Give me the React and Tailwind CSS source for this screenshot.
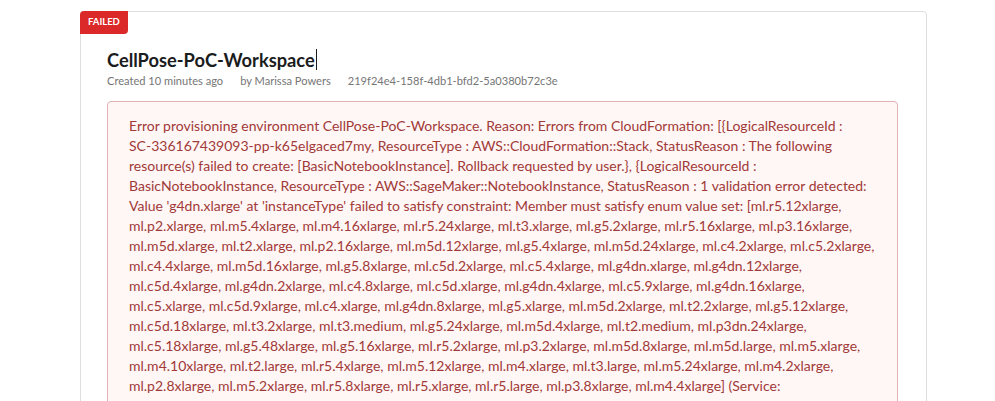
import React from "react";

const errorStart =
  "Error provisioning environment CellPose-PoC-Workspace. Reason: Errors from CloudFormation: [{LogicalResourceId : ";
const errorId = "SC-336167439093-pp-k65elgaced7my,";
const errorRest =
  " ResourceType : AWS::CloudFormation::Stack, StatusReason : The following resource(s) failed to create: [BasicNotebookInstance]. Rollback requested by user.}, {LogicalResourceId : BasicNotebookInstance, ResourceType : AWS::SageMaker::NotebookInstance, StatusReason : 1 validation error detected: Value 'g4dn.xlarge' at 'instanceType' failed to satisfy constraint: Member must satisfy enum value set: [ml.r5.12xlarge, ml.p2.xlarge, ml.m5.4xlarge, ml.m4.16xlarge, ml.r5.24xlarge, ml.t3.xlarge, ml.g5.2xlarge, ml.r5.16xlarge, ml.p3.16xlarge, ml.m5d.xlarge, ml.t2.xlarge, ml.p2.16xlarge, ml.m5d.12xlarge, ml.g5.4xlarge, ml.m5d.24xlarge, ml.c4.2xlarge, ml.c5.2xlarge, ml.c4.4xlarge, ml.m5d.16xlarge, ml.g5.8xlarge, ml.c5d.2xlarge, ml.c5.4xlarge, ml.g4dn.xlarge, ml.g4dn.12xlarge, ml.c5d.4xlarge, ml.g4dn.2xlarge, ml.c4.8xlarge, ml.c5d.xlarge, ml.g4dn.4xlarge, ml.c5.9xlarge, ml.g4dn.16xlarge, ml.c5.xlarge, ml.c5d.9xlarge, ml.c4.xlarge, ml.g4dn.8xlarge, ml.g5.xlarge, ml.m5d.2xlarge, ml.t2.2xlarge, ml.g5.12xlarge, ml.c5d.18xlarge, ml.t3.2xlarge, ml.t3.medium, ml.g5.24xlarge, ml.m5d.4xlarge, ml.t2.medium, ml.p3dn.24xlarge, ml.c5.18xlarge, ml.g5.48xlarge, ml.g5.16xlarge, ml.r5.2xlarge, ml.p3.2xlarge, ml.m5d.8xlarge, ml.m5d.large, ml.m5.xlarge, ml.m4.10xlarge, ml.t2.large, ml.r5.4xlarge, ml.m5.12xlarge, ml.m4.xlarge, ml.t3.large, ml.m5.24xlarge, ml.m4.2xlarge, ml.p2.8xlarge, ml.m5.2xlarge, ml.r5.8xlarge, ml.r5.xlarge, ml.r5.large, ml.p3.8xlarge, ml.m4.4xlarge] (Service: AmazonSageMaker; Status Code: 400; Error Code: ValidationException; Request ID: 47e2b1c8-3d0a-4b6e-9f1a-2c7d8e5f6a10)}]";

const App = () => {
  return (
    <div
      className="w-[995px] h-[401px] overflow-hidden bg-white"
      style={{ fontFamily: "Lato, 'Liberation Sans', sans-serif" }}
    >
      <div className="pt-[11px] pl-[80px] pr-[68px]">
        <div className="border border-[#dededf] rounded-[4px] h-[420px]">
          <div className="flex">
            <span className="-mt-px -ml-px bg-[#db2828] text-white text-[9.5px] font-bold leading-none px-[8px] pt-[6px] pb-[7px] rounded-tl-[4px] rounded-br-[4px]">
              FAILED
            </span>
          </div>
          <div className="pl-[26px] pr-[28px]">
            <h1 className="mt-[14px] text-[18.3px] font-bold leading-[24px] text-[#1b1c1d] flex items-center">
              CellPose-PoC-Workspace
              <span className="inline-block w-px h-[21px] bg-[#1b1c1d] ml-px"></span>
            </h1>
            <div className="mt-[1px] flex gap-[17px] text-[11.1px] leading-[16px] text-[#767676]">
              <span>Created 10 minutes ago</span>
              <span>by Marissa Powers</span>
              <span>219f24e4-158f-4db1-bfd2-5a0380b72c3e</span>
            </div>
            <div className="mt-[12px] bg-[#fff6f6] border border-[#e0b4b4] rounded-[4px] px-[21px] pt-[14px] pb-[14px] text-[14px] leading-[20px] text-[#9f3a38]">
              {errorStart}
              <span className="whitespace-nowrap">{errorId}</span>
              {errorRest}
            </div>
          </div>
        </div>
      </div>
    </div>
  );
};

export default App;
